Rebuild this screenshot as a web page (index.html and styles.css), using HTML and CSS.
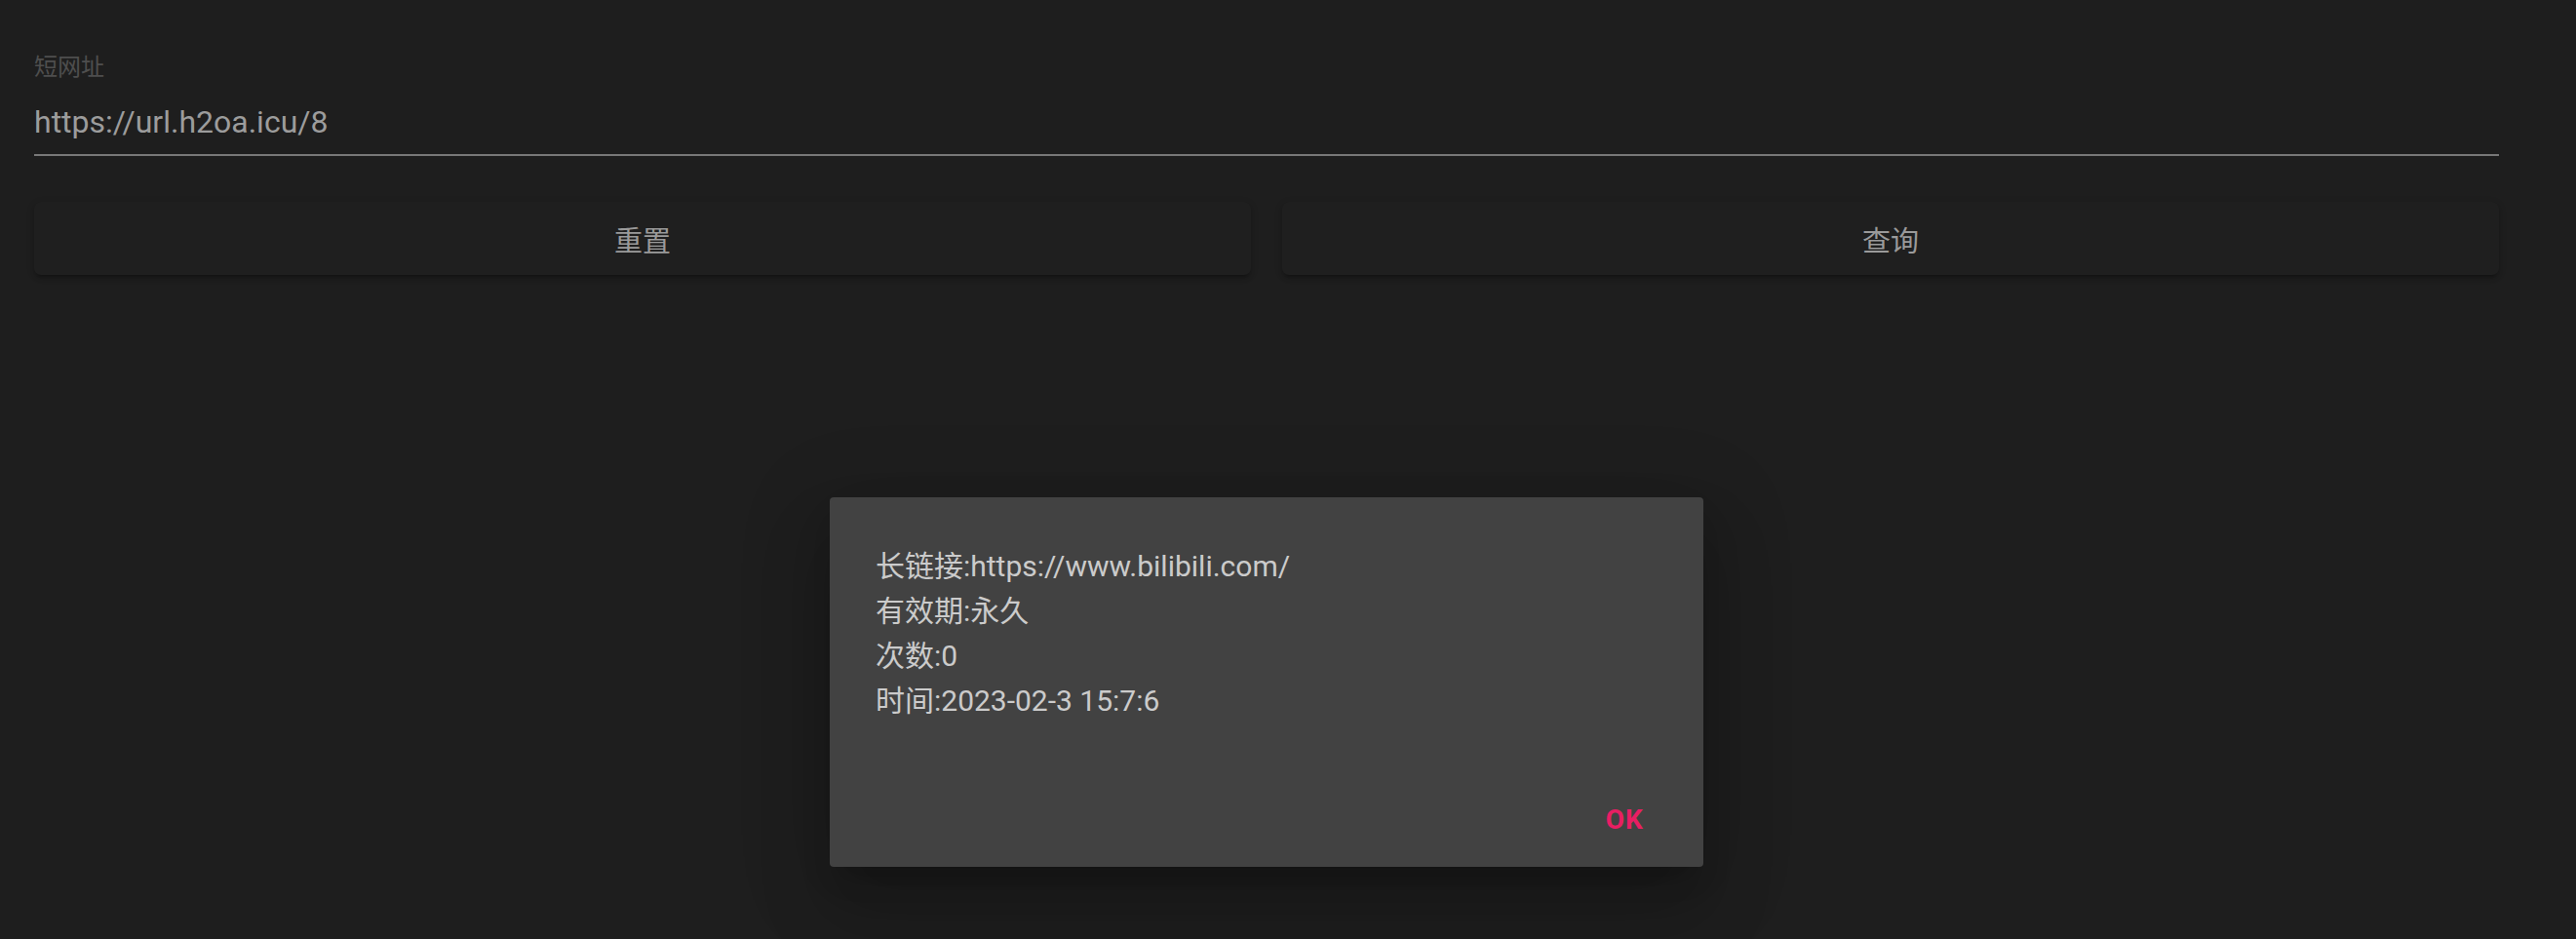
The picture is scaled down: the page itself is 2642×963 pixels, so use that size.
FILE: index.html
```html
<!DOCTYPE html>
<html lang="zh-CN">
<head>
<meta charset="utf-8">
<title>短网址查询</title>
<link rel="stylesheet" href="styles.css">
</head>
<body>
<div class="page">
  <div class="field">
    <div class="field-label">短网址</div>
    <div class="field-input">https://url.h2oa.icu/8</div>
  </div>
  <div class="actions-row">
    <button class="btn">重置</button>
    <button class="btn">查询</button>
  </div>
</div>
<div class="overlay">
  <div class="dialog">
    <div class="dialog-text">
      <div>长链接:https://www.bilibili.com/</div>
      <div>有效期:永久</div>
      <div>次数:0</div>
      <div>时间:2023-02-3 15:7:6</div>
    </div>
    <div class="dialog-actions">
      <button class="text-btn">OK</button>
    </div>
  </div>
</div>
</body>
</html>
```

FILE: styles.css
```css
html, body {
  margin: 0;
  padding: 0;
  background: #1e1e1e;
  height: 963px;
  overflow: hidden;
}

body {
  font-family: Roboto, "Noto Sans CJK SC", sans-serif;
  position: relative;
}

.page {
  padding: 53px 79px 0 35px;
}

.field {
  display: flex;
  flex-direction: column;
  border-bottom: 2px solid #787878;
  padding-bottom: 11px;
}

.field-label {
  font-size: 24px;
  line-height: 32px;
  color: #4e4e4e;
}

.field-input {
  margin-top: 18px;
  font-size: 32px;
  line-height: 44px;
  color: #9c9c9c;
}

.actions-row {
  margin-top: 47px;
  display: grid;
  grid-template-columns: 1fr 1fr;
  gap: 32px;
}

.btn {
  height: 75px;
  border: none;
  border-radius: 7px;
  background: #1f1f1f;
  color: #9a9a9a;
  font-family: Roboto, "Noto Sans CJK SC", sans-serif;
  font-size: 29px;
  box-shadow: 0 5px 2px -4px rgba(0,0,0,.2), 0 4px 4px 0 rgba(0,0,0,.14), 0 2px 9px 0 rgba(0,0,0,.12);
}

.overlay {
  position: absolute;
  inset: 0;
}

.dialog {
  position: absolute;
  left: 851px;
  top: 510px;
  width: 896px;
  height: 379px;
  background: #424242;
  border-radius: 4px;
  display: flex;
  flex-direction: column;
  box-shadow: 0 21px 28px -13px rgba(0,0,0,.2), 0 45px 71px 6px rgba(0,0,0,.14), 0 17px 86px 15px rgba(0,0,0,.12);
}

.dialog-text {
  padding: 48px 45px 0 47px;
  font-size: 30px;
  line-height: 46px;
  color: #cbcbcb;
}

.dialog-actions {
  margin-top: auto;
  display: flex;
  justify-content: flex-end;
  padding: 15px 33px 15px 15px;
}

.text-btn {
  height: 67px;
  padding: 0 28px;
  border: none;
  background: transparent;
  color: #e91e63;
  font-family: Roboto, sans-serif;
  font-weight: 700;
  font-size: 28px;
  letter-spacing: 0.04em;
  text-transform: uppercase;
}
```
